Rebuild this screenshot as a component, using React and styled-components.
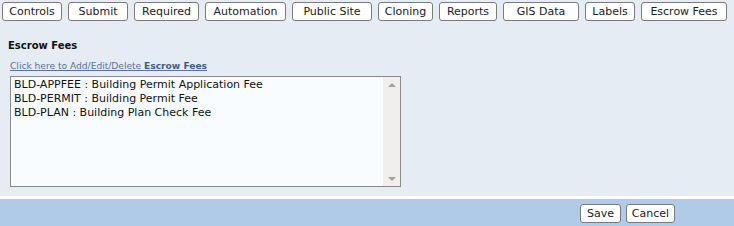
import React from "react";
import styled, { createGlobalStyle } from "styled-components";

const GlobalStyle = createGlobalStyle`
  html, body {
    margin: 0;
    padding: 0;
    background: #e6ecf3;
    font-family: "DejaVu Sans", Verdana, sans-serif;
  }
`;

const Page = styled.div`
  width: 734px;
  height: 226px;
  display: flex;
  flex-direction: column;
  background: #e6ecf3;
`;

const Main = styled.div`
  flex: 1;
  display: flex;
  flex-direction: column;
`;

const TabBar = styled.div`
  display: flex;
  gap: 6px;
  padding: 2px 0 0 2px;
`;

const TabButton = styled.button`
  box-sizing: border-box;
  width: ${(p) => p.$w}px;
  height: 19px;
  padding: 0;
  margin: 0;
  border: 1px solid #7b7b7b;
  border-radius: 3px;
  background: #ffffff;
  color: #222;
  font-family: "DejaVu Sans", Verdana, sans-serif;
  font-size: 11px;
  line-height: 17px;
  text-align: center;
  cursor: pointer;
`;

const Section = styled.div`
  display: flex;
  flex-direction: column;
  padding: 19px 0 0 8px;
`;

const Heading = styled.div`
  font-size: 10px;
  font-weight: bold;
  color: #111;
  line-height: 12px;
`;

const EditLink = styled.a`
  margin-top: 9px;
  margin-left: 2px;
  font-size: 9.1px;
  line-height: 11px;
  color: #5a6fa8;
  text-decoration: underline;
  cursor: pointer;

  b {
    color: #3d5a96;
  }
`;

const ListBox = styled.div`
  box-sizing: border-box;
  margin: 4px 0 0 2px;
  width: 391px;
  height: 111px;
  border: 1px solid #8a8a8a;
  background: #f8fcff;
  display: flex;
`;

const Items = styled.div`
  flex: 1;
  padding: 1px 0 0 3px;
`;

const Item = styled.div`
  font-size: 11px;
  line-height: 14px;
  color: #111;
  white-space: nowrap;
`;

const ScrollTrack = styled.div`
  width: 17px;
  background: #f1efee;
  display: flex;
  flex-direction: column;
  justify-content: space-between;
  align-items: center;
  padding: 6px 0 5px;
`;

const Arrow = styled.div`
  width: 0;
  height: 0;
  border-left: 4px solid transparent;
  border-right: 4px solid transparent;
  ${(p) =>
    p.$down
      ? "border-top: 4px solid #a3a3a3;"
      : "border-bottom: 4px solid #a3a3a3;"}
`;

const Divider = styled.div`
  height: 3px;
  background: #ffffff;
  margin-top: 1px;
`;

const Footer = styled.div`
  height: 27px;
  background: #b0cbe8;
  display: flex;
  justify-content: flex-end;
  align-items: flex-start;
  gap: 5px;
  padding: 5px 59px 0 0;
  box-sizing: border-box;
`;

const tabs = [
  ["Controls", 60],
  ["Submit", 60],
  ["Required", 65],
  ["Automation", 81],
  ["Public Site", 80],
  ["Cloning", 55],
  ["Reports", 58],
  ["GIS Data", 76],
  ["Labels", 50],
  ["Escrow Fees", 86],
];

const fees = [
  "BLD-APPFEE : Building Permit Application Fee",
  "BLD-PERMIT : Building Permit Fee",
  "BLD-PLAN : Building Plan Check Fee",
];

export default function App() {
  return (
    <Page>
      <GlobalStyle />
      <Main>
        <TabBar>
          {tabs.map(([label, w]) => (
            <TabButton key={label} $w={w}>
              {label}
            </TabButton>
          ))}
        </TabBar>
        <Section>
          <Heading>Escrow Fees</Heading>
          <EditLink>
            Click here to Add/Edit/Delete <b>Escrow Fees</b>
          </EditLink>
          <ListBox>
            <Items>
              {fees.map((f) => (
                <Item key={f}>{f}</Item>
              ))}
            </Items>
            <ScrollTrack>
              <Arrow />
              <Arrow $down />
            </ScrollTrack>
          </ListBox>
        </Section>
      </Main>
      <Divider />
      <Footer>
        <TabButton $w={41}>Save</TabButton>
        <TabButton $w={49}>Cancel</TabButton>
      </Footer>
    </Page>
  );
}
